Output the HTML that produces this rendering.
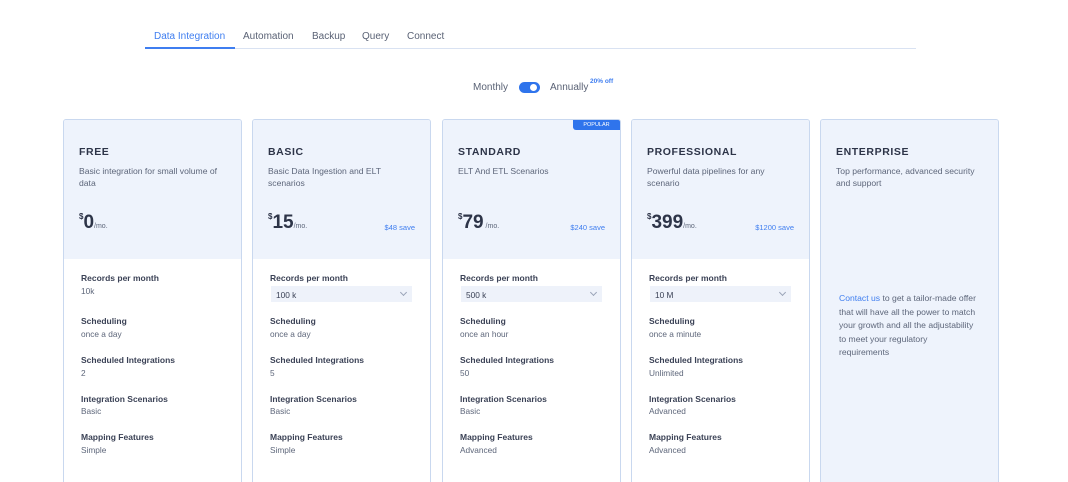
<!DOCTYPE html>
<html><head><meta charset="utf-8"><style>
*{margin:0;padding:0;box-sizing:border-box}
html,body{width:1068px;height:482px;overflow:hidden}
body{background:#fff;font-family:"Liberation Sans",sans-serif;color:#3b4256;position:relative}
.a{position:absolute;white-space:nowrap}
.tab{font-size:10px;color:#5a6275;top:31px}
.card{position:absolute;top:119px;width:179px;height:380px;border:1px solid #c9d8ef;border-radius:3px;background:#fff;overflow:hidden}
.hd{position:absolute;left:0;top:0;right:0;height:139px;background:#eef3fc}
.t{position:absolute;left:15px;top:26px;font-size:10.5px;font-weight:bold;letter-spacing:0.6px;color:#2d3448}
.d{position:absolute;left:15px;top:45px;font-size:8.6px;line-height:12px;color:#5d667a;width:143px}
.p{position:absolute;left:15px;top:92px;font-size:19px;font-weight:bold;color:#2d3448;white-space:nowrap}
.p sup{font-size:8px;vertical-align:9px}
.p small{font-size:7px;font-weight:normal;color:#5d667a}
.s{position:absolute;right:15px;top:103px;font-size:7.5px;color:#3f7ef0}
.l{position:absolute;left:17px;font-size:8.5px;font-weight:bold;color:#3b4256}
.v{position:absolute;left:17px;font-size:8.3px;color:#5d667a}
.dd{position:absolute;left:18px;width:141px;height:16px;background:#eef2fa;font-size:8.3px;color:#3b4256;padding:4px 0 0 5px}
.dd:after{content:"";position:absolute;right:6px;top:4px;width:4px;height:4px;border-right:1px solid #9aa4b8;border-bottom:1px solid #9aa4b8;transform:rotate(45deg)}
</style></head><body>
<div class="a tab" style="left:154px;color:#3f7ef0">Data Integration</div>
<div class="a tab" style="left:243px">Automation</div>
<div class="a tab" style="left:312px">Backup</div>
<div class="a tab" style="left:362px">Query</div>
<div class="a tab" style="left:407px">Connect</div>
<div class="a" style="left:145px;top:48px;width:771px;height:1px;background:#d9e2f2"></div>
<div class="a" style="left:145px;top:47px;width:90px;height:2px;background:#3f7ef0"></div>
<div class="a" style="left:473px;top:82px;font-size:10px;color:#5a6275">Monthly</div>
<div class="a" style="left:519px;top:82px;width:21px;height:11px;border-radius:6px;background:#2f74ec"></div>
<div class="a" style="left:530px;top:84px;width:7px;height:7px;border-radius:50%;background:#fff"></div>
<div class="a" style="left:550px;top:82px;font-size:10px;color:#5a6275">Annually</div>
<div class="a" style="left:590px;top:78px;font-size:6.5px;font-weight:bold;color:#3f7ef0">20% off</div>

<div class="card" style="left:63px"><div class="hd"></div>
<div class="t">FREE</div><div class="d">Basic integration for small volume of data</div>
<div class="p"><sup>$</sup>0<small>/mo.</small></div>
<div class="l" style="top:153px">Records per month</div><div class="v" style="top:166px">10k</div>
<div class="l" style="top:196px">Scheduling</div><div class="v" style="top:209px">once a day</div>
<div class="l" style="top:235px">Scheduled Integrations</div><div class="v" style="top:248px">2</div>
<div class="l" style="top:274px">Integration Scenarios</div><div class="v" style="top:286px">Basic</div>
<div class="l" style="top:312px">Mapping Features</div><div class="v" style="top:325px">Simple</div>
</div>

<div class="card" style="left:252px"><div class="hd"></div>
<div class="t">BASIC</div><div class="d">Basic Data Ingestion and ELT scenarios</div>
<div class="p"><sup>$</sup>15<small>/mo.</small></div><div class="s">$48 save</div>
<div class="l" style="top:153px">Records per month</div><div class="dd" style="top:166px">100 k</div>
<div class="l" style="top:196px">Scheduling</div><div class="v" style="top:209px">once a day</div>
<div class="l" style="top:235px">Scheduled Integrations</div><div class="v" style="top:248px">5</div>
<div class="l" style="top:274px">Integration Scenarios</div><div class="v" style="top:286px">Basic</div>
<div class="l" style="top:312px">Mapping Features</div><div class="v" style="top:325px">Simple</div>
</div>

<div class="card" style="left:442px"><div class="hd"></div>
<div class="a" style="right:0;top:0;width:47px;height:10px;background:#2f74ec;border-radius:0 0 0 3px;color:#fff;font-size:5.5px;text-align:center;line-height:10px">POPULAR</div>
<div class="t">STANDARD</div><div class="d">ELT And ETL Scenarios</div>
<div class="p"><sup>$</sup>79<small> /mo.</small></div><div class="s">$240 save</div>
<div class="l" style="top:153px">Records per month</div><div class="dd" style="top:166px">500 k</div>
<div class="l" style="top:196px">Scheduling</div><div class="v" style="top:209px">once an hour</div>
<div class="l" style="top:235px">Scheduled Integrations</div><div class="v" style="top:248px">50</div>
<div class="l" style="top:274px">Integration Scenarios</div><div class="v" style="top:286px">Basic</div>
<div class="l" style="top:312px">Mapping Features</div><div class="v" style="top:325px">Advanced</div>
</div>

<div class="card" style="left:631px"><div class="hd"></div>
<div class="t">PROFESSIONAL</div><div class="d" style="width:125px">Powerful data pipelines for any scenario</div>
<div class="p"><sup>$</sup>399<small>/mo.</small></div><div class="s">$1200 save</div>
<div class="l" style="top:153px">Records per month</div><div class="dd" style="top:166px">10 M</div>
<div class="l" style="top:196px">Scheduling</div><div class="v" style="top:209px">once a minute</div>
<div class="l" style="top:235px">Scheduled Integrations</div><div class="v" style="top:248px">Unlimited</div>
<div class="l" style="top:274px">Integration Scenarios</div><div class="v" style="top:286px">Advanced</div>
<div class="l" style="top:312px">Mapping Features</div><div class="v" style="top:325px">Advanced</div>
</div>

<div class="card" style="left:820px;background:#eef3fc"><div class="hd"></div>
<div class="t">ENTERPRISE</div><div class="d">Top performance, advanced security and support</div>
<div class="d" style="left:18px;top:172px;width:auto;white-space:nowrap;line-height:13.6px"><span style="color:#3f7ef0">Contact us</span> to get a tailor-made offer<br>that will have all the power to match<br>your growth and all the adjustability<br>to meet your regulatory<br>requirements</div>
</div>
</body></html>
